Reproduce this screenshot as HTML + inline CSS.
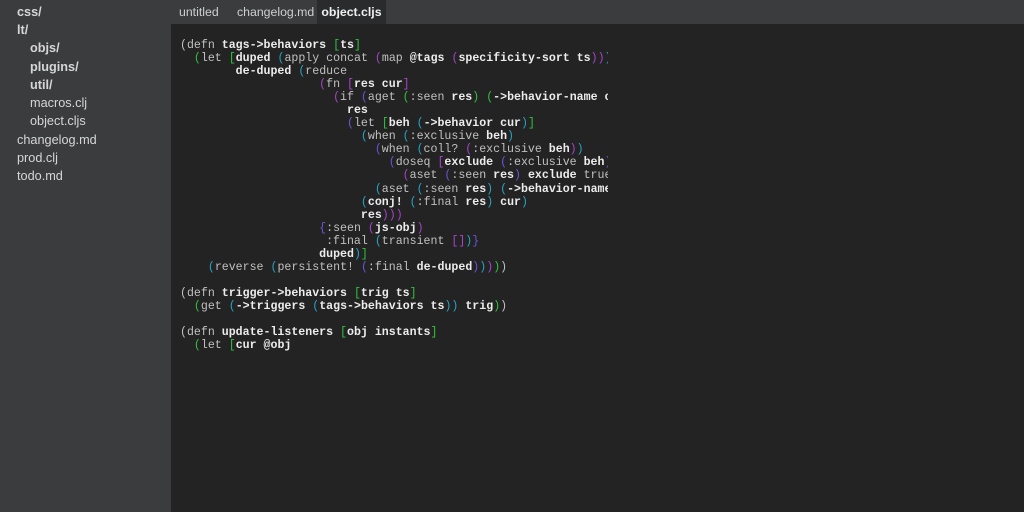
<!DOCTYPE html>
<html><head><meta charset="utf-8"><style>
html,body{margin:0;padding:0;width:1024px;height:512px;overflow:hidden;background:#3b3c3e;font-family:"Liberation Sans",sans-serif;}
#side{position:absolute;left:0;top:0;width:171px;height:512px;background:#3b3c3e;}
#side div{position:absolute;font-size:12.7px;color:#d6d6d6;white-space:nowrap}
#side .b{font-weight:bold}
#tabs{position:absolute;left:171px;top:0;width:853px;height:24px;background:#3b3c3e;}
.tab{position:absolute;top:0;height:24px;line-height:24px;font-size:12.3px;color:#cfcfcf}
.act{background:#2a2b2d;color:#f0f0f0;font-weight:bold}
#ed{position:absolute;left:171px;top:24px;width:853px;height:488px;background:#232323;}
#code{position:absolute;left:180px;top:39px;width:428px;overflow:hidden;font-family:"Liberation Mono",monospace;font-size:11.6px;line-height:13.05px;color:#c0c0c0;white-space:pre;}
.s{color:#ececec;font-weight:bold}
.g{color:#2fc23c}.c{color:#27a3c4}.p{color:#a544c8}.v{color:#6a55d8}.k{color:#9a9a9a}
</style></head><body>
<div id="side">
<div class="b" style="left:17px;top:5px">css/</div>
<div class="b" style="left:17px;top:23px">lt/</div>
<div class="b" style="left:30px;top:41px">objs/</div>
<div class="b" style="left:30px;top:60px">plugins/</div>
<div class="b" style="left:30px;top:78px">util/</div>
<div style="left:30px;top:96px">macros.clj</div>
<div style="left:30px;top:114px">object.cljs</div>
<div style="left:17px;top:133px">changelog.md</div>
<div style="left:17px;top:151px">prod.clj</div>
<div style="left:17px;top:169px">todo.md</div>
</div>
<div id="tabs">
<div class="tab" style="left:8px">untitled</div>
<div class="tab" style="left:66px">changelog.md</div>
<div class="tab act" style="left:146px;width:69px;text-align:center">object.cljs</div>
</div>
<div id="ed"></div>
<div id="code">(defn <span class="s">tags-&gt;behaviors</span> <span class="g">[</span><span class="s">ts</span><span class="g">]</span>
  <span class="g">(</span>let <span class="g">[</span><span class="s">duped</span> <span class="c">(</span>apply concat <span class="p">(</span>map <span class="s">@tags</span> <span class="p">(</span><span class="s">specificity-sort ts</span><span class="p">))</span><span class="c">)</span>
        <span class="s">de-duped</span> <span class="c">(</span>reduce
                    <span class="p">(</span>fn <span class="p">[</span><span class="s">res cur</span><span class="p">]</span>
                      <span class="p">(</span>if <span class="v">(</span>aget <span class="g">(</span>:seen <span class="s">res</span><span class="g">)</span> <span class="g">(</span><span class="s">-&gt;behavior-name cur</span><span class="g">)</span><span class="v">)</span>
                        <span class="s">res</span>
                        <span class="v">(</span>let <span class="g">[</span><span class="s">beh</span> <span class="c">(</span><span class="s">-&gt;behavior cur</span><span class="c">)</span><span class="g">]</span>
                          <span class="c">(</span>when <span class="c">(</span>:exclusive <span class="s">beh</span><span class="c">)</span>
                            <span class="v">(</span>when <span class="c">(</span>coll? <span class="p">(</span>:exclusive <span class="s">beh</span><span class="p">)</span><span class="c">)</span>
                              <span class="v">(</span>doseq <span class="p">[</span><span class="s">exclude</span> <span class="v">(</span>:exclusive <span class="s">beh</span><span class="v">)</span><span class="p">]</span>
                                <span class="p">(</span>aset <span class="v">(</span>:seen <span class="s">res</span><span class="v">)</span> <span class="s">exclude</span> true<span class="p">)</span>
                            <span class="c">(</span>aset <span class="c">(</span>:seen <span class="s">res</span><span class="c">)</span> <span class="c">(</span><span class="s">-&gt;behavior-name cur</span><span class="c">)</span>
                          <span class="c">(</span><span class="s">conj!</span> <span class="c">(</span>:final <span class="s">res</span><span class="c">)</span> <span class="s">cur</span><span class="c">)</span>
                          <span class="s">res</span><span class="p">)))</span>
                    <span class="v">{</span>:seen <span class="p">(</span><span class="s">js-obj</span><span class="p">)</span>
                     :final <span class="c">(</span>transient <span class="p">[]</span><span class="c">)</span><span class="v">}</span>
                    <span class="s">duped</span><span class="c">)</span><span class="g">]</span>
    <span class="c">(</span>reverse <span class="c">(</span>persistent! <span class="v">(</span>:final <span class="s">de-duped</span><span class="v">)</span><span class="c">)</span><span class="p">)</span><span class="g">)</span>)

(defn <span class="s">trigger-&gt;behaviors</span> <span class="g">[</span><span class="s">trig ts</span><span class="g">]</span>
  <span class="g">(</span>get <span class="c">(</span><span class="s">-&gt;triggers</span> <span class="c">(</span><span class="s">tags-&gt;behaviors ts</span><span class="c">))</span> <span class="s">trig</span><span class="g">)</span>)

(defn <span class="s">update-listeners</span> <span class="g">[</span><span class="s">obj instants</span><span class="g">]</span>
  <span class="g">(</span>let <span class="g">[</span><span class="s">cur @obj</span>
</div>
</body></html>
